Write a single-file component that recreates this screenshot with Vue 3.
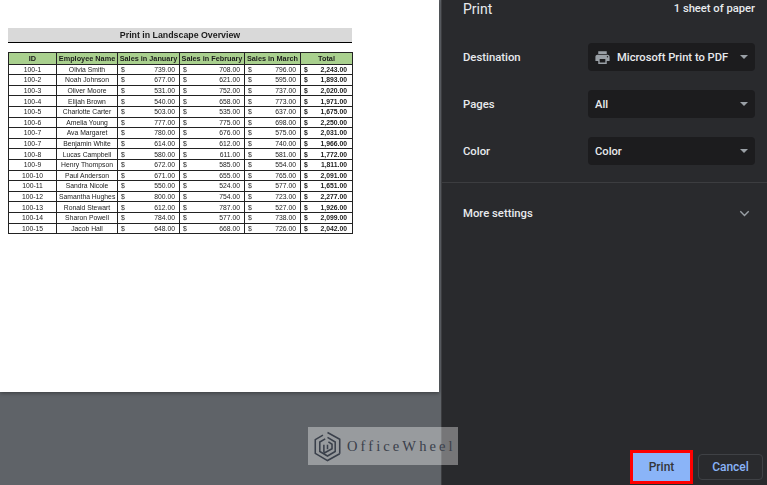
<template>
  <div class="page">
    <div class="preview">
      <div class="paper">
        <div class="sheet">
          <div class="sheet-title">Print in Landscape Overview</div>
          <table class="sales">
            <colgroup>
              <col v-for="w in colWidths" :key="w.id" :style="{ width: w.px + 'px' }" />
            </colgroup>
            <thead>
              <tr>
                <th v-for="h in headers" :key="h">{{ h }}</th>
              </tr>
            </thead>
            <tbody>
              <tr v-for="r in rows" :key="r.name">
                <td>{{ r.id }}</td>
                <td>{{ r.name }}</td>
                <td v-for="(v, i) in r.sales" :key="i">
                  <div class="money"><span>$</span><span>{{ v }}.00</span></div>
                </td>
                <td class="total">
                  <div class="money"><span>$</span><span>{{ r.total }}.00</span></div>
                </td>
              </tr>
            </tbody>
          </table>
        </div>
      </div>
    </div>

    <div class="panel">
      <div class="panel-head">
        <span class="panel-title">Print</span>
        <span class="sheets">1 sheet of paper</span>
      </div>

      <div class="settings">
        <div class="setting">
          <span class="label">Destination</span>
          <div class="select">
            <svg class="printer" viewBox="0 0 24 24"><path d="M19 8H5c-1.66 0-3 1.34-3 3v6h4v4h12v-4h4v-6c0-1.66-1.34-3-3-3zm-3 11H8v-5h8v5zm3-7c-.55 0-1-.45-1-1s.45-1 1-1 1 .45 1 1-.45 1-1 1zm-1-9H6v4h12V3z" /></svg>
            <span class="select-text">Microsoft Print to PDF</span>
            <i class="caret"></i>
          </div>
        </div>
        <div class="setting">
          <span class="label">Pages</span>
          <div class="select">
            <span class="select-text">All</span>
            <i class="caret"></i>
          </div>
        </div>
        <div class="setting">
          <span class="label">Color</span>
          <div class="select">
            <span class="select-text">Color</span>
            <i class="caret"></i>
          </div>
        </div>
      </div>

      <div class="more">
        <span class="label">More settings</span>
        <svg class="chevron" viewBox="0 0 12 8"><path d="M1.2 1.4 6 6.2l4.8-4.8" /></svg>
      </div>

      <div class="actions">
        <button class="btn primary">Print</button>
        <button class="btn">Cancel</button>
      </div>
    </div>

    <!-- watermark over the screenshot -->
    <div class="watermark">
      <svg class="wm-logo" viewBox="0 0 32 34">
        <path d="M16 1.5 29.5 9v16" />
        <path d="M11 4.5 2.5 9.5v15L16 32.5l13.5-7.5" />
        <path d="M16 7 24.5 12v10.5L16 27.5 7.5 22.5V12l6-3.5" />
        <path d="M12 15v8.5M17 12l4 2.5v5L12 24.500" />
        <path d="M16 15v5" />
      </svg>
      <span class="wm-text">OfficeWheel</span>
    </div>
  </div>
</template>

<script setup>
const headers = ['ID', 'Employee Name', 'Sales in January', 'Sales in February', 'Sales in March', 'Total']

const colWidths = [
  { id: 'id', px: 48 },
  { id: 'name', px: 61 },
  { id: 'jan', px: 62 },
  { id: 'feb', px: 65 },
  { id: 'mar', px: 56 },
  { id: 'total', px: 52 }
]

const row = (id, name, a, b, c, total) => ({ id, name, sales: [a, b, c], total })

const rows = [
  row('100-1', 'Olivia Smith', 739, 708, 796, '2,243'),
  row('100-2', 'Noah Johnson', 677, 621, 595, '1,893'),
  row('100-3', 'Oliver Moore', 531, 752, 737, '2,020'),
  row('100-4', 'Elijah Brown', 540, 658, 773, '1,971'),
  row('100-5', 'Charlotte Carter', 503, 535, 637, '1,675'),
  row('100-6', 'Amelia Young', 777, 775, 698, '2,250'),
  row('100-7', 'Ava Margaret', 780, 676, 575, '2,031'),
  row('100-7', 'Benjamin White', 614, 612, 740, '1,966'),
  row('100-8', 'Lucas Campbell', 580, 611, 581, '1,772'),
  row('100-9', 'Henry Thompson', 672, 585, 554, '1,811'),
  row('100-10', 'Paul Anderson', 671, 655, 765, '2,091'),
  row('100-11', 'Sandra Nicole', 550, 524, 577, '1,651'),
  row('100-12', 'Samantha Hughes', 800, 754, 723, '2,277'),
  row('100-13', 'Ronald Stewart', 612, 787, 527, '1,926'),
  row('100-14', 'Sharon Powell', 784, 577, 738, '2,099'),
  row('100-15', 'Jacob Hall', 648, 668, 726, '2,042')
]
</script>

<style>
html, body {
  margin: 0;
  background: #292a2d;
}
</style>

<style scoped>
.page {
  position: relative;
  display: flex;
  width: 767px;
  height: 485px;
  overflow: hidden;
  font-family: Roboto, "Liberation Sans", sans-serif;
}

/* Preview */
.preview {
  width: 441px;
  flex: none;
  background: #5f6368;
}

.paper {
  width: 439px;
  height: 392px;
  padding: 28px 0 0 8px;
  box-sizing: border-box;
  background: #fff;
  box-shadow: 0 1px 4px rgba(0, 0, 0, 0.4);
}

.sheet {
  width: 344px;
  font-family: "Liberation Sans", Arial, sans-serif;
  color: #1c1c1c;
  filter: blur(0.35px);
}

.sheet-title {
  height: 14px;
  line-height: 14px;
  background: #d9d9d9;
  border-bottom: 1px solid #000;
  text-align: center;
  font-size: 8.8px;
  font-weight: 700;
}

.sales {
  width: 344px;
  margin-top: 9px;
  border-collapse: collapse;
  table-layout: fixed;
  font-size: 6.8px;
}

.sales th,
.sales td {
  padding: 0 2px;
  border: 1px solid #222;
  text-align: center;
  white-space: nowrap;
  overflow: hidden;
  height: 9.6px;
  line-height: 9px;
}

.sales th {
  height: 10.6px;
  padding: 0;
  background: #a9d08e;
  font-weight: 700;
  font-size: 7.3px;
}

.money {
  display: flex;
  justify-content: space-between;
  padding: 0 2px 0 1px;
}

.total {
  font-weight: 700;
}

.total .money {
  padding-right: 3px;
}

/* Right column */
.panel {
  flex: 1;
  display: flex;
  flex-direction: column;
  background: #292a2d;
  border-left: 1px solid #3c3d40;
  padding: 0 12px 0 21px;
  color: #e8eaed;
  font-size: 12px;
}

.panel-head {
  display: flex;
  justify-content: space-between;
  align-items: center;
  height: 17px;
}

.panel-title {
  font-size: 14px;
}

.sheets {
  font-weight: 500;
  font-size: 11.2px;
}

.settings {
  display: flex;
  flex-direction: column;
  gap: 19px;
  margin-top: 26px;
}

.setting {
  display: flex;
  justify-content: space-between;
  align-items: center;
}

.label {
  font-size: 11.3px;
  font-weight: 500;
}

.select {
  display: flex;
  align-items: center;
  width: 167px;
  height: 28px;
  padding: 0 7px;
  box-sizing: border-box;
  border-radius: 4px;
  background: #1c1c1e;
}

.printer {
  width: 17px;
  height: 17px;
  margin-right: 6px;
  margin-left: -1px;
  fill: #9aa0a6;
}

.select-text {
  flex: 1;
  font-size: 11.2px;
  font-weight: 500;
}

.caret {
  width: 0;
  height: 0;
  border-left: 4.5px solid transparent;
  border-right: 4.5px solid transparent;
  border-top: 4.5px solid #9aa0a6;
}

.more {
  display: flex;
  justify-content: space-between;
  align-items: center;
  margin: 17px -12px 0 -21px;
  padding: 18px 17px 0 21px;
  height: 24px;
  border-top: 1px solid #3c3d40;
}

.chevron {
  width: 11px;
  height: 7px;
  fill: none;
  stroke: #9aa0a6;
  stroke-width: 1.6;
}

.actions {
  display: flex;
  justify-content: flex-end;
  align-items: center;
  gap: 8px;
  margin-top: auto;
  margin-right: -8px;
  padding-bottom: 4px;
}

.btn {
  width: 65px;
  height: 26px;
  padding: 0;
  border: 1px solid #3f4145;
  border-radius: 4px;
  background: transparent;
  color: #8ab4f8;
  font-family: inherit;
  font-size: 12px;
  font-weight: 500;
}

.btn.primary {
  width: 57px;
  height: 28px;
  border: 0;
  border-radius: 0;
  background: #8ab4f8;
  color: #35363a;
  outline: 3px solid #f00;
}

/* Watermark */
.watermark {
  position: absolute;
  left: 308px;
  top: 427px;
  width: 150px;
  height: 38px;
  display: flex;
  align-items: center;
  padding-left: 5px;
  box-sizing: border-box;
  background: rgba(255, 255, 255, 0.36);
}

.wm-logo {
  width: 29px;
  height: 33px;
  fill: none;
  stroke: #3a404b;
  stroke-width: 1.7;
}

.wm-text {
  margin-left: 5px;
  font-family: "Liberation Serif", serif;
  font-size: 14.5px;
  letter-spacing: 3.1px;
  color: #3a404b;
  white-space: nowrap;
}
</style>
